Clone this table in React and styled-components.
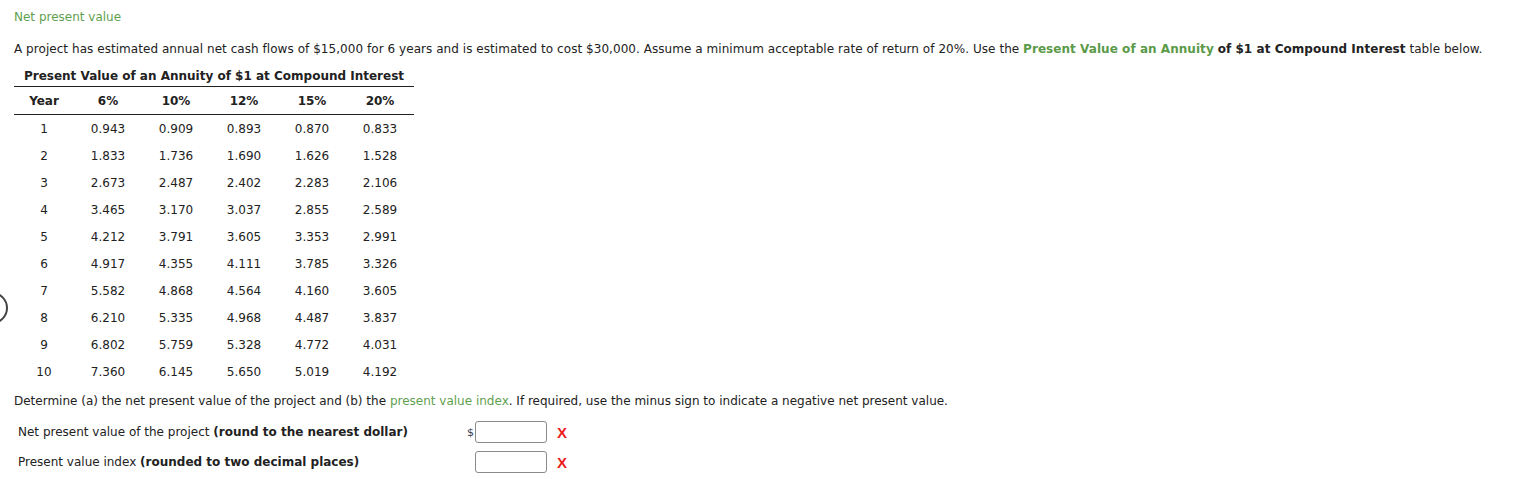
import React from "react";
import styled, { createGlobalStyle } from "styled-components";

const GlobalStyle = createGlobalStyle`
  body {
    margin: 0;
    background: #fff;
    font-family: "DejaVu Sans", Verdana, sans-serif;
    color: #222;
    overflow: hidden;
  }
`;

const Page = styled.div`
  position: relative;
  padding: 9px 14px 0 14px;
  font-size: 12px;
`;

const Title = styled.div`
  color: #5f9f50;
  line-height: 16px;
  margin-bottom: 16px;
`;

const Para = styled.p`
  margin: 0;
  line-height: 16px;
  letter-spacing: 0.05px;
`;

const GreenBold = styled.span`
  color: #5a9a48;
  font-weight: bold;
`;

const Green = styled.span`
  color: #5f9f50;
`;

const Table = styled.table`
  border-collapse: collapse;
  width: 400px;
  margin-top: 11px;
  caption {
    font-weight: bold;
    line-height: 16px;
    padding-bottom: 2px;
  }
`;

const Th = styled.th`
  width: ${(p) => (p.$first ? "60px" : "68px")};
  font-weight: bold;
  text-align: center;
  padding: 0;
  height: 27px;
  border-top: 1px solid #222;
  border-bottom: 1px solid #222;
`;

const Td = styled.td`
  text-align: center;
  padding: 0;
  height: 27px;
`;

const Question = styled.p`
  margin: 8px 0 0 0;
  line-height: 16px;
`;

const AnswerGrid = styled.div`
  display: grid;
  grid-template-columns: 441px 16px 73px auto;
  align-items: center;
  row-gap: 8px;
  margin-top: 12px;
  padding-left: 4px;
`;

const Label = styled.div`
  line-height: 16px;
`;

const Dollar = styled.div`
  font-size: 11px;
  color: #345;
  text-align: right;
  padding-right: 1px;
`;

const Input = styled.input`
  width: 72px;
  height: 22px;
  box-sizing: border-box;
  border: 1px solid #8a8a8a;
  border-radius: 3px;
  margin: 0;
`;

const Cross = styled.span`
  color: #ee1c1c;
  font-family: "Liberation Sans", Arial, sans-serif;
  font-weight: bold;
  font-size: 15px;
  margin-left: 9px;
`;

const Ring = styled.div`
  position: absolute;
  left: -24px;
  top: 292px;
  width: 28px;
  height: 28px;
  border: 2.5px solid #444;
  border-radius: 50%;
`;

const rates = ["6%", "10%", "12%", "15%", "20%"];
const rows = [
  ["0.943", "0.909", "0.893", "0.870", "0.833"],
  ["1.833", "1.736", "1.690", "1.626", "1.528"],
  ["2.673", "2.487", "2.402", "2.283", "2.106"],
  ["3.465", "3.170", "3.037", "2.855", "2.589"],
  ["4.212", "3.791", "3.605", "3.353", "2.991"],
  ["4.917", "4.355", "4.111", "3.785", "3.326"],
  ["5.582", "4.868", "4.564", "4.160", "3.605"],
  ["6.210", "5.335", "4.968", "4.487", "3.837"],
  ["6.802", "5.759", "5.328", "4.772", "4.031"],
  ["7.360", "6.145", "5.650", "5.019", "4.192"],
];

export default function App() {
  return (
    <Page>
      <GlobalStyle />
      <Ring />
      <Title>Net present value</Title>
      <Para>
        A project has estimated annual net cash flows of $15,000 for 6 years and is estimated to cost $30,000. Assume a
        minimum acceptable rate of return of 20%. Use the <GreenBold>Present Value of an Annuity</GreenBold>{" "}
        <b>of $1 at Compound Interest</b> table below.
      </Para>
      <Table>
        <caption>Present Value of an Annuity of $1 at Compound Interest</caption>
        <thead>
          <tr>
            <Th $first>Year</Th>
            {rates.map((r) => (
              <Th key={r}>{r}</Th>
            ))}
          </tr>
        </thead>
        <tbody>
          {rows.map((r, i) => (
            <tr key={i}>
              <Td>{i + 1}</Td>
              {r.map((v, j) => (
                <Td key={j}>{v}</Td>
              ))}
            </tr>
          ))}
        </tbody>
      </Table>
      <Question>
        Determine (a) the net present value of the project and (b) the <Green>present value index</Green>. If required,
        use the minus sign to indicate a negative net present value.
      </Question>
      <AnswerGrid>
        <Label>
          Net present value of the project <b>(round to the nearest dollar)</b>
        </Label>
        <Dollar>$</Dollar>
        <Input type="text" />
        <Cross>X</Cross>
        <Label>
          Present value index <b>(rounded to two decimal places)</b>
        </Label>
        <div />
        <Input type="text" />
        <Cross>X</Cross>
      </AnswerGrid>
    </Page>
  );
}
